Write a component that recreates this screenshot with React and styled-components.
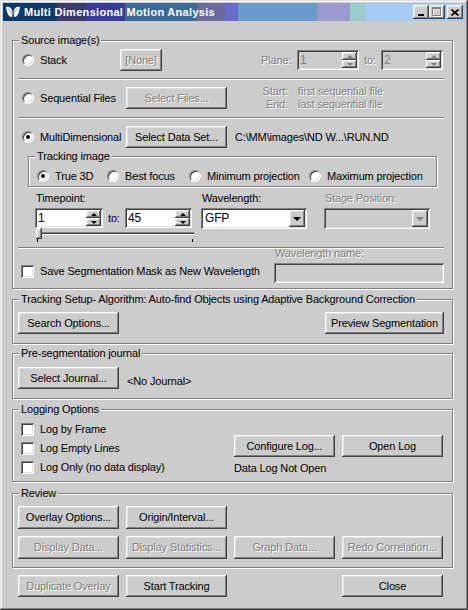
import React from 'react'
import styled, { createGlobalStyle, css } from 'styled-components'

const GlobalStyle = createGlobalStyle`
  html, body {
    margin: 0;
    padding: 0;
    background: #cccccc;
  }
  body {
    font-family: "Liberation Sans", Arial, sans-serif;
    font-size: 11px;
    line-height: 13px;
    letter-spacing: -0.15px;
    color: #000;
  }
  * {
    box-sizing: border-box;
  }
`

const raised = css`
  background: #cccccc;
  box-shadow: inset -1px -1px 0 #404040, inset 1px 1px 0 #ffffff,
    inset -2px -2px 0 #808080, inset 2px 2px 0 #dfdfdf;
`

const sunken = css`
  box-shadow: inset 1px 1px 0 #808080, inset -1px -1px 0 #ffffff,
    inset 2px 2px 0 #404040, inset -2px -2px 0 #dfdfdf;
`

const grayed = css`
  color: #808080;
  text-shadow: 1px 1px 0 #ffffff;
`

const Window = styled.div`
  width: 468px;
  height: 610px;
  padding: 3px;
  background: #cccccc;
  box-shadow: inset -1px -1px 0 #404040, inset 1px 1px 0 #dfdfdf,
    inset -2px -2px 0 #808080, inset 2px 2px 0 #ffffff;
  display: flex;
  flex-direction: column;
`

const TitleBar = styled.div`
  height: 18px;
  display: flex;
  align-items: center;
  padding: 0 2px 0 2px;
  background: linear-gradient(
    to right,
    #0b3a6b 0 54px,
    #3a3a6b 54px 83px,
    #3a3a9c 83px 122px,
    #3a6a9c 122px 194px,
    #6a6a9c 194px 222px,
    #6a6acc 222px 235px,
    #6a9acc 235px 314px,
    #9a9acc 314px 347px,
    #9acccc 347px 362px,
    #a6caf0 362px
  );
`

const TitleText = styled.span`
  color: #ffffff;
  font-weight: bold;
  font-size: 11px;
  margin-left: 3px;
  letter-spacing: 0.3px;
`

const CaptionButtons = styled.div`
  margin-left: auto;
  display: flex;
`

const CaptionButton = styled.span`
  ${raised}
  width: 16px;
  height: 14px;
  display: flex;
  align-items: center;
  justify-content: center;
  margin-left: ${p => (p.$gap ? 2 : 0)}px;
`

const Body = styled.div`
  padding: 0 12px 0 9px;
`

const Group = styled.div`
  position: relative;
  width: ${p => p.$w || 441}px;
  height: ${p => p.$h}px;
  margin-top: ${p => p.$mt || 0}px;
  margin-left: ${p => p.$ml || 0}px;
  padding: ${p => p.$pad || '0'};
  border: 1px solid #808080;
  box-shadow: inset 1px 1px 0 #ffffff, 1px 1px 0 #ffffff;
`

const Legend = styled.span`
  position: absolute;
  top: -7px;
  left: 6px;
  padding: 0 2px;
  background: #cccccc;
  line-height: 13px;
  white-space: nowrap;
`

const Row = styled.div`
  display: flex;
  align-items: ${p => p.$align || 'center'};
  justify-content: ${p => p.$justify || 'flex-start'};
  height: ${p => (p.$h ? `${p.$h}px` : 'auto')};
  margin-top: ${p => p.$mt || 0}px;
  padding-left: ${p => p.$pl || 0}px;
`

const Separator = styled.div`
  width: 426px;
  height: 2px;
  margin: ${p => p.$mt}px 0 0 5px;
  border-top: 1px solid #808080;
  border-bottom: 1px solid #ffffff;
`

const Button = styled.button`
  ${raised}
  flex-shrink: 0;
  width: ${p => p.$w || 101}px;
  height: ${p => p.$h || 22}px;
  border: 0;
  margin: 0;
  padding: 0;
  font: inherit;
  letter-spacing: inherit;
  color: #000;
  white-space: nowrap;
  ${p => p.disabled && grayed}
  ${p => p.$col && `grid-column: ${p.$col};`}
`

const ButtonGrid = styled.div`
  display: grid;
  grid-template-columns: repeat(${p => p.$cols || 4}, 101px);
  grid-auto-rows: ${p => p.$rowH || 22}px;
  column-gap: 7px;
  row-gap: ${p => p.$rowGap || 7}px;
  margin-top: ${p => p.$mt || 0}px;
  padding-left: ${p => p.$pl || 0}px;
`

const Text = styled.span`
  flex-shrink: 0;
  white-space: nowrap;
  width: ${p => (p.$w ? `${p.$w}px` : 'auto')};
  margin-left: ${p => p.$ml || 0}px;
  margin-top: ${p => p.$mt || 0}px;
  ${p => p.$off && grayed}
`

const Choice = styled.label`
  display: flex;
  align-items: center;
  flex-shrink: 0;
  width: ${p => (p.$w ? `${p.$w}px` : 'auto')};
  height: ${p => (p.$h ? `${p.$h}px` : 'auto')};
  margin-bottom: ${p => p.$mb || 0}px;
  white-space: nowrap;
`

const RadioDot = styled.span`
  position: relative;
  flex-shrink: 0;
  width: 12px;
  height: 12px;
  margin-right: 6px;
  border-radius: 50%;
  background: #ffffff;
  border: 1px solid;
  border-color: #808080 #ffffff #ffffff #808080;
  box-shadow: inset 1px 1px 0 #404040, inset -1px -1px 0 #dfdfdf;

  ${p => p.$on && css`
    &::after {
      content: '';
      position: absolute;
      left: 3px;
      top: 3px;
      width: 4px;
      height: 4px;
      border-radius: 50%;
      background: #000;
    }
  `}
`

const CheckBox = styled.span`
  ${sunken}
  flex-shrink: 0;
  width: 13px;
  height: 13px;
  margin-right: 6px;
  background: #ffffff;
`

const Radio = ({ w, on, children }) => (
  <Choice $w={w}>
    <RadioDot $on={on} />
    {children}
  </Choice>
)

const Check = ({ children, ...rest }) => (
  <Choice {...rest}>
    <CheckBox />
    {children}
  </Choice>
)

const Field = styled.div`
  ${sunken}
  flex-shrink: 0;
  display: flex;
  width: ${p => p.$w}px;
  height: ${p => p.$h || 20}px;
  padding: 2px;
  background: ${p => (p.$off ? '#cccccc' : '#ffffff')};
`

const FieldValue = styled.span`
  flex: 1;
  padding-left: ${p => p.$pl || 1}px;
  line-height: 16px;
  font-size: 12px;
  color: ${p => (p.$off ? '#808080' : '#000')};
`

const SpinButtons = styled.div`
  display: flex;
  flex-direction: column;
  width: 15px;
`

const SpinArrow = styled.span`
  ${raised}
  flex: 1;
  display: flex;
  align-items: center;
  justify-content: center;

  &::before {
    content: '';
    border-left: 3px solid transparent;
    border-right: 3px solid transparent;
    ${p => (p.$down ? 'border-top' : 'border-bottom')}: 3px solid ${p => (p.$off ? '#808080' : '#000')};
  }
`

const ComboButton = styled.span`
  ${raised}
  width: 16px;
  display: flex;
  align-items: center;
  justify-content: center;

  &::before {
    content: '';
    border-left: 4px solid transparent;
    border-right: 4px solid transparent;
    border-top: 4px solid ${p => (p.$off ? '#808080' : '#000')};
  }
`

const Spinner = ({ w, value, off }) => (
  <Field $w={w} $off={off}>
    <FieldValue $off={off}>{value}</FieldValue>
    <SpinButtons>
      <SpinArrow $off={off} />
      <SpinArrow $off={off} $down />
    </SpinButtons>
  </Field>
)

const Combo = ({ value, off }) => (
  <Field $w={106} $h={21} $off={off}>
    <FieldValue $off={off} $pl={2}>{value}</FieldValue>
    <ComboButton $off={off} />
  </Field>
)

const StartEnd = styled.div`
  display: grid;
  grid-template-columns: 30px auto;
  column-gap: 10px;
  margin-left: 31px;
  ${grayed}

  span:nth-child(odd) {
    text-align: right;
  }
`

const SubGroupRow = styled.div`
  display: flex;
  align-items: center;
  height: 12px;
`

const ControlColumn = styled.div`
  display: flex;
  flex-direction: column;
  width: ${p => p.$w}px;
  flex-shrink: 0;
`

const ColumnLabel = styled.span`
  height: 13px;
  padding-left: 1px;
  margin-bottom: 3px;
  white-space: nowrap;
  ${p => p.$off && grayed}
`

const Slider = styled.div`
  position: relative;
  width: 159px;
  height: 14px;
`

const SliderTrack = styled.div`
  position: absolute;
  left: 1px;
  right: 0;
  top: 4px;
  height: 3px;
  border-top: 1px solid #808080;
  border-bottom: 1px solid #ffffff;
  background: #404040;
`

const SliderThumb = styled.div`
  ${raised}
  position: absolute;
  left: 1px;
  top: 0;
  width: 6px;
  height: 11px;
`

const SliderTick = styled.div`
  position: absolute;
  top: 11px;
  width: 1px;
  height: 3px;
  background: #000;
  ${p => (p.$end ? 'right: 1px;' : 'left: 2px;')}
`

const SideField = styled.div`
  display: flex;
  flex-direction: column;
  margin-left: auto;
  margin-right: 8px;
`

const LogColumns = styled.div`
  display: flex;
`

const LogChecks = styled.div`
  width: 221px;
  padding: 10px 0 0 8px;
  display: flex;
  flex-direction: column;
`

const LogActions = styled.div`
  padding-top: 25px;
  display: flex;
  flex-direction: column;
`

const AppIcon = () => (
  <svg width="16" height="14" viewBox="0 0 16 14">
    <path d="M1 2 C4 1 7 3 7.5 7 L7 12 C4 12 2 9 1 2 Z" fill="#ffffff" />
    <path d="M15 2 C12 1 9 3 8.5 7 L9 12 C12 12 14 9 15 2 Z" fill="#ffffff" />
    <path d="M2.5 4 C4 4 6 5 6.5 8" stroke="#8aa6c8" strokeWidth="1" fill="none" />
    <path d="M13.5 4 C12 4 10 5 9.5 8" stroke="#8aa6c8" strokeWidth="1" fill="none" />
  </svg>
)

const MinGlyph = () => (
  <svg width="8" height="8" viewBox="0 0 8 8">
    <rect x="1" y="6" width="6" height="2" fill="#000" />
  </svg>
)

const MaxGlyph = () => (
  <svg width="10" height="10" viewBox="0 0 10 10">
    <path d="M1.5 1.5 h8 v8 h-8 z M1 2 h9" stroke="#ffffff" strokeWidth="1" fill="none" />
    <path d="M0.5 0.5 h8 v8 h-8 z M0 1.5 h9" stroke="#808080" strokeWidth="1" fill="none" />
  </svg>
)

const CloseGlyph = () => (
  <svg width="8" height="7" viewBox="0 0 8 7">
    <path d="M0.5 0.5 L7.5 6.5 M7.5 0.5 L0.5 6.5" stroke="#000" strokeWidth="1.6" />
  </svg>
)

export default function App() {
  return (
    <>
      <GlobalStyle />
      <Window>
        <TitleBar>
          <AppIcon />
          <TitleText>Multi Dimensional Motion Analysis</TitleText>
          <CaptionButtons>
            <CaptionButton><MinGlyph /></CaptionButton>
            <CaptionButton><MaxGlyph /></CaptionButton>
            <CaptionButton $gap><CloseGlyph /></CaptionButton>
          </CaptionButtons>
        </TitleBar>

        <Body>
          <Group $mt={19} $h={249}>
            <Legend>Source image(s)</Legend>

            <Row $mt={7} $h={24} $pl={9}>
              <Radio w={98}>Stack</Radio>
              <Button $w={42} disabled>[None]</Button>
              <Text $ml={99} $w={36} $off>Plane:</Text>
              <Spinner w={62} value="1" off />
              <Text $ml={5} $w={17} $off>to:</Text>
              <Spinner w={62} value="2" off />
            </Row>

            <Separator $mt={6} />

            <Row $mt={5} $h={26} $pl={9}>
              <Radio w={104}>Sequential Files</Radio>
              <Button disabled>Select Files...</Button>
              <StartEnd>
                <span>Start:</span>
                <span>first sequential file</span>
                <span>End:</span>
                <span>last sequential file</span>
              </StartEnd>
            </Row>

            <Separator $mt={6} />

            <Row $mt={6} $h={24} $pl={9}>
              <Radio w={104} on>MultiDimensional</Radio>
              <Button>Select Data Set...</Button>
              <Text $ml={8}>{'C:\\MM\\images\\ND W...\\RUN.ND'}</Text>
            </Row>

            <Group $mt={7} $ml={15} $w={409} $h={31} $pad="13px 0 0 8px">
              <Legend>Tracking image</Legend>
              <SubGroupRow>
                <Radio w={70} on>True 3D</Radio>
                <Radio w={82}>Best focus</Radio>
                <Radio w={120}>Minimum projection</Radio>
                <Radio>Maximum projection</Radio>
              </SubGroupRow>
            </Group>

            <Row $mt={5} $pl={22} $align="flex-start">
              <ControlColumn $w={166}>
                <ColumnLabel>Timepoint:</ColumnLabel>
                <Row>
                  <Spinner w={68} value="1" />
                  <Text $ml={5} $w={17}>to:</Text>
                  <Spinner w={67} value="45" />
                </Row>
                <Slider>
                  <SliderTrack />
                  <SliderThumb />
                  <SliderTick />
                  <SliderTick $end />
                </Slider>
              </ControlColumn>
              <ControlColumn $w={123}>
                <ColumnLabel>Wavelength:</ColumnLabel>
                <Combo value="GFP" />
              </ControlColumn>
              <ControlColumn $w={106}>
                <ColumnLabel $off>Stage Position:</ColumnLabel>
                <Combo value="" off />
              </ControlColumn>
            </Row>

            <Separator $mt={5} />

            <Row $mt={1} $h={33} $pl={8} $align="flex-end">
              <Check $h={20} $mb={2}>Save Segmentation Mask as New Wavelength</Check>
              <SideField>
                <ColumnLabel $off>Wavelength name:</ColumnLabel>
                <Field $w={170} $off />
              </SideField>
            </Row>
          </Group>

          <Group $mt={10} $h={45} $pad="12px 8px 0 5px">
            <Legend>Tracking Setup- Algorithm: Auto-find Objects using Adaptive Background Correction</Legend>
            <Row $justify="space-between">
              <Button>Search Options...</Button>
              <Button $w={119}>Preview Segmentation</Button>
            </Row>
          </Group>

          <Group $mt={9} $h={46} $pad="13px 0 0 5px">
            <Legend>Pre-segmentation journal</Legend>
            <Row>
              <Button>Select Journal...</Button>
              <Text $ml={8} $mt={6}>&lt;No Journal&gt;</Text>
            </Row>
          </Group>

          <Group $mt={10} $h={73}>
            <Legend>Logging Options</Legend>
            <LogColumns>
              <LogChecks>
                <Check $h={19}>Log by Frame</Check>
                <Check $h={19}>Log Empty Lines</Check>
                <Check $h={19}>Log Only (no data display)</Check>
              </LogChecks>
              <LogActions>
                <ButtonGrid $cols={2}>
                  <Button>Configure Log...</Button>
                  <Button>Open Log</Button>
                </ButtonGrid>
                <Text $mt={5}>Data Log Not Open</Text>
              </LogActions>
            </LogColumns>
          </Group>

          <Group $mt={11} $h={75} $pad="12px 0 0 5px">
            <Legend>Review</Legend>
            <ButtonGrid $rowH={23}>
              <Button $h={23}>Overlay Options...</Button>
              <Button $h={23}>Origin/Interval...</Button>
              <Button $h={23} $col={1} disabled>Display Data...</Button>
              <Button $h={23} disabled>Display Statistics...</Button>
              <Button $h={23} disabled>Graph Data...</Button>
              <Button $h={23} disabled>Redo Correlation...</Button>
            </ButtonGrid>
          </Group>

          <ButtonGrid $mt={7} $pl={6}>
            <Button disabled>Duplicate Overlay</Button>
            <Button>Start Tracking</Button>
            <Button $col={4}>Close</Button>
          </ButtonGrid>
        </Body>
      </Window>
    </>
  )
}
